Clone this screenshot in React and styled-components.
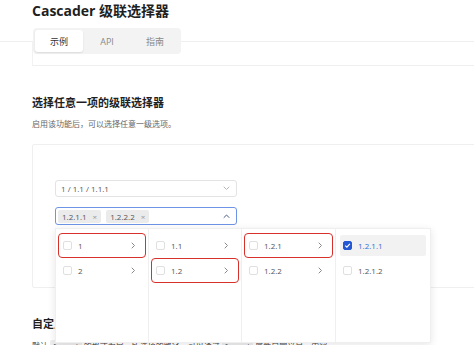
import React from "react"
import styled, { createGlobalStyle } from "styled-components"

const GlobalStyle = createGlobalStyle`
  html, body {
    margin: 0;
    padding: 0;
    background: #fff;
    overflow: hidden;
  }
  body {
    font-family: "Open Sans", "Noto Sans", "Noto Sans CJK SC", sans-serif;
    color: #222;
  }
`

const Page = styled.div`
  width: 474px;
  height: 345px;
  overflow: hidden;
`

const Title = styled.h1`
  margin: 0;
  padding-left: 32px;
  font-size: 14px;
  line-height: 22px;
  font-weight: 700;
  color: #1f1f1f;
`

const TabBand = styled.div`
  margin-top: 19px;
  border-top: 1px solid #efefef;
`

const TabFrame = styled.div`
  display: flex;
  margin-left: 32px;
  height: 23px;
  border-left: 1px solid #f2f2f2;
  border-bottom: 1px solid #efefef;
`

const TabGroup = styled.div`
  display: flex;
  margin-top: -14px;
  height: 22px;
  padding: 2px;
  background: #f3f3f3;
  border-radius: 4px;
`

const Tab = styled.div`
  width: 48px;
  display: flex;
  align-items: center;
  justify-content: center;
  font-size: 9px;
  border-radius: 3px;
  color: ${(p) => (p.active ? "#333" : "#8a8a8a")};
  background: ${(p) => (p.active ? "#fff" : "transparent")};
  box-shadow: ${(p) => (p.active ? "0 1px 2px rgba(0,0,0,0.1)" : "none")};
`

const Content = styled.div`
  padding-left: 32px;
`

const SectionTitle = styled.h2`
  margin: ${(p) => p.top}px 0 0;
  font-size: 11px;
  line-height: 16px;
  font-weight: 700;
  color: #1f1f1f;
`

const Desc = styled.p`
  margin: 7px 0 0;
  font-size: 8px;
  line-height: 12px;
  color: #666;
`

const DemoBox = styled.div`
  margin-top: 14px;
  margin-right: -20px;
  border: 1px solid #efefef;
  border-radius: 2px;
  padding: 35px 0 62px 22px;
`

const Field = styled.div`
  position: relative;
  width: 182px;
  margin-top: ${(p) => p.top || 0}px;
`

const Input = styled.div`
  box-sizing: border-box;
  height: ${(p) => (p.focused ? 18 : 17)}px;
  display: flex;
  align-items: center;
  gap: 5px;
  padding: 0 6px 0 ${(p) => (p.focused ? 2 : 5)}px;
  border: 1px solid ${(p) => (p.focused ? "#6d94e6" : "#e3e3e3")};
  border-radius: 3px;
  font-size: 8px;
  color: #555;
  background: #fff;
`

const Value = styled.span`
  flex: 1;
`

const Tag = styled.span`
  display: flex;
  align-items: center;
  gap: 6px;
  height: 13px;
  padding: 0 4px;
  background: #ebebeb;
  border-radius: 2px;
  font-size: 8px;
  color: #555;
`

const TagClose = styled.span`
  color: #999;
  font-size: 8px;
`

const Spacer = styled.span`
  flex: 1;
`

const Panel = styled.div`
  position: absolute;
  left: 0;
  top: calc(100% + 3px);
  display: flex;
  height: 113px;
  background: #fff;
  border: 1px solid #efefef;
  box-shadow: 0 2px 8px rgba(0, 0, 0, 0.1);
  z-index: 2;
`

const Column = styled.div`
  width: ${(p) => p.width}px;
  box-sizing: border-box;
  padding-top: 6px;
  display: flex;
  flex-direction: column;
  gap: 4px;
  border-right: ${(p) => (p.last ? "none" : "1px solid #efefef")};
`

const Item = styled.div`
  height: 21px;
  margin: 0 4px;
  padding: 0 7px 0 3px;
  display: flex;
  align-items: center;
  gap: 6px;
  font-size: 8px;
  border-radius: 2px;
  color: ${(p) => (p.checked ? "#3a6cd6" : "#555")};
  background: ${(p) => (p.checked ? "#f2f2f2" : "transparent")};
  outline: ${(p) => (p.marked ? "1.5px solid #d8302a" : "none")};
  outline-offset: 1px;
`

const Box = styled.span`
  width: 9px;
  height: 9px;
  box-sizing: border-box;
  border-radius: 2px;
  border: 1px solid ${(p) => (p.checked ? "#2357d4" : "#e0e0e0")};
  background: ${(p) => (p.checked ? "#2357d4" : "#fff")};
  display: flex;
  align-items: center;
  justify-content: center;
`

const Label = styled.span`
  flex: 1;
`

const Paragraph = styled.p`
  margin: 8px 0 0;
  font-size: 8px;
  line-height: 12px;
  color: #444;
  white-space: nowrap;
`

const Code = styled.span`
  background: #eee;
  padding: 0 3px;
  border-radius: 2px;
`

const Chevron = ({ dir = "down", color = "#aaa" }) => {
  const points = {
    down: "1,2 3.5,4.5 6,2",
    up: "1,4.5 3.5,2 6,4.5",
    right: "2,1 4.5,3.5 2,6",
  }[dir]
  return (
    <svg width="7" height="7" viewBox="0 0 7 7">
      <polyline points={points} fill="none" stroke={color} strokeWidth="1" strokeLinecap="round" strokeLinejoin="round" />
    </svg>
  )
}

const Check = () => (
  <svg width="7" height="7" viewBox="0 0 7 7">
    <polyline points="1.2,3.6 2.9,5.2 5.9,1.8" fill="none" stroke="#fff" strokeWidth="1.2" />
  </svg>
)

const columns = [
  { width: 93, items: [{ label: "1", marked: true, more: true }, { label: "2", more: true }] },
  { width: 93, items: [{ label: "1.1", more: true }, { label: "1.2", marked: true, more: true }] },
  { width: 94, items: [{ label: "1.2.1", marked: true, more: true }, { label: "1.2.2", more: true }] },
  { width: 94, last: true, items: [{ label: "1.2.1.1", checked: true }, { label: "1.2.1.2" }] },
]

const App = () => {
  return (
    <Page>
      <GlobalStyle />
      <Title>Cascader 级联选择器</Title>
      <TabBand>
        <TabFrame>
          <TabGroup>
            <Tab active>示例</Tab>
            <Tab>API</Tab>
            <Tab>指南</Tab>
          </TabGroup>
        </TabFrame>
      </TabBand>
      <Content>
        <SectionTitle top={29}>选择任意一项的级联选择器</SectionTitle>
        <Desc>启用该功能后，可以选择任意一级选项。</Desc>
        <DemoBox>
          <Field>
            <Input>
              <Value>1 / 1.1 / 1.1.1</Value>
              <Chevron dir="down" color="#b5b5b5" />
            </Input>
          </Field>
          <Field top={10}>
            <Input focused>
              <Tag>
                1.2.1.1 <TagClose>×</TagClose>
              </Tag>
              <Tag>
                1.2.2.2 <TagClose>×</TagClose>
              </Tag>
              <Spacer />
              <Chevron dir="up" color="#4a5d80" />
            </Input>
            <Panel>
              {columns.map((col, i) => (
                <Column key={i} width={col.width} last={col.last}>
                  {col.items.map((it) => (
                    <Item key={it.label} marked={it.marked} checked={it.checked}>
                      <Box checked={it.checked}>{it.checked && <Check />}</Box>
                      <Label>{it.label}</Label>
                      {it.more && <Chevron dir="right" color="#888" />}
                    </Item>
                  ))}
                </Column>
              ))}
            </Panel>
          </Field>
        </DemoBox>
        <SectionTitle top={28}>自定义显示</SectionTitle>
        <Paragraph>
          默认 <Code>format</Code> 的格式为展示所选项的路径，可以通过 <Code>format</Code> 属性自定义显示内容。
        </Paragraph>
      </Content>
    </Page>
  )
}

export default App
